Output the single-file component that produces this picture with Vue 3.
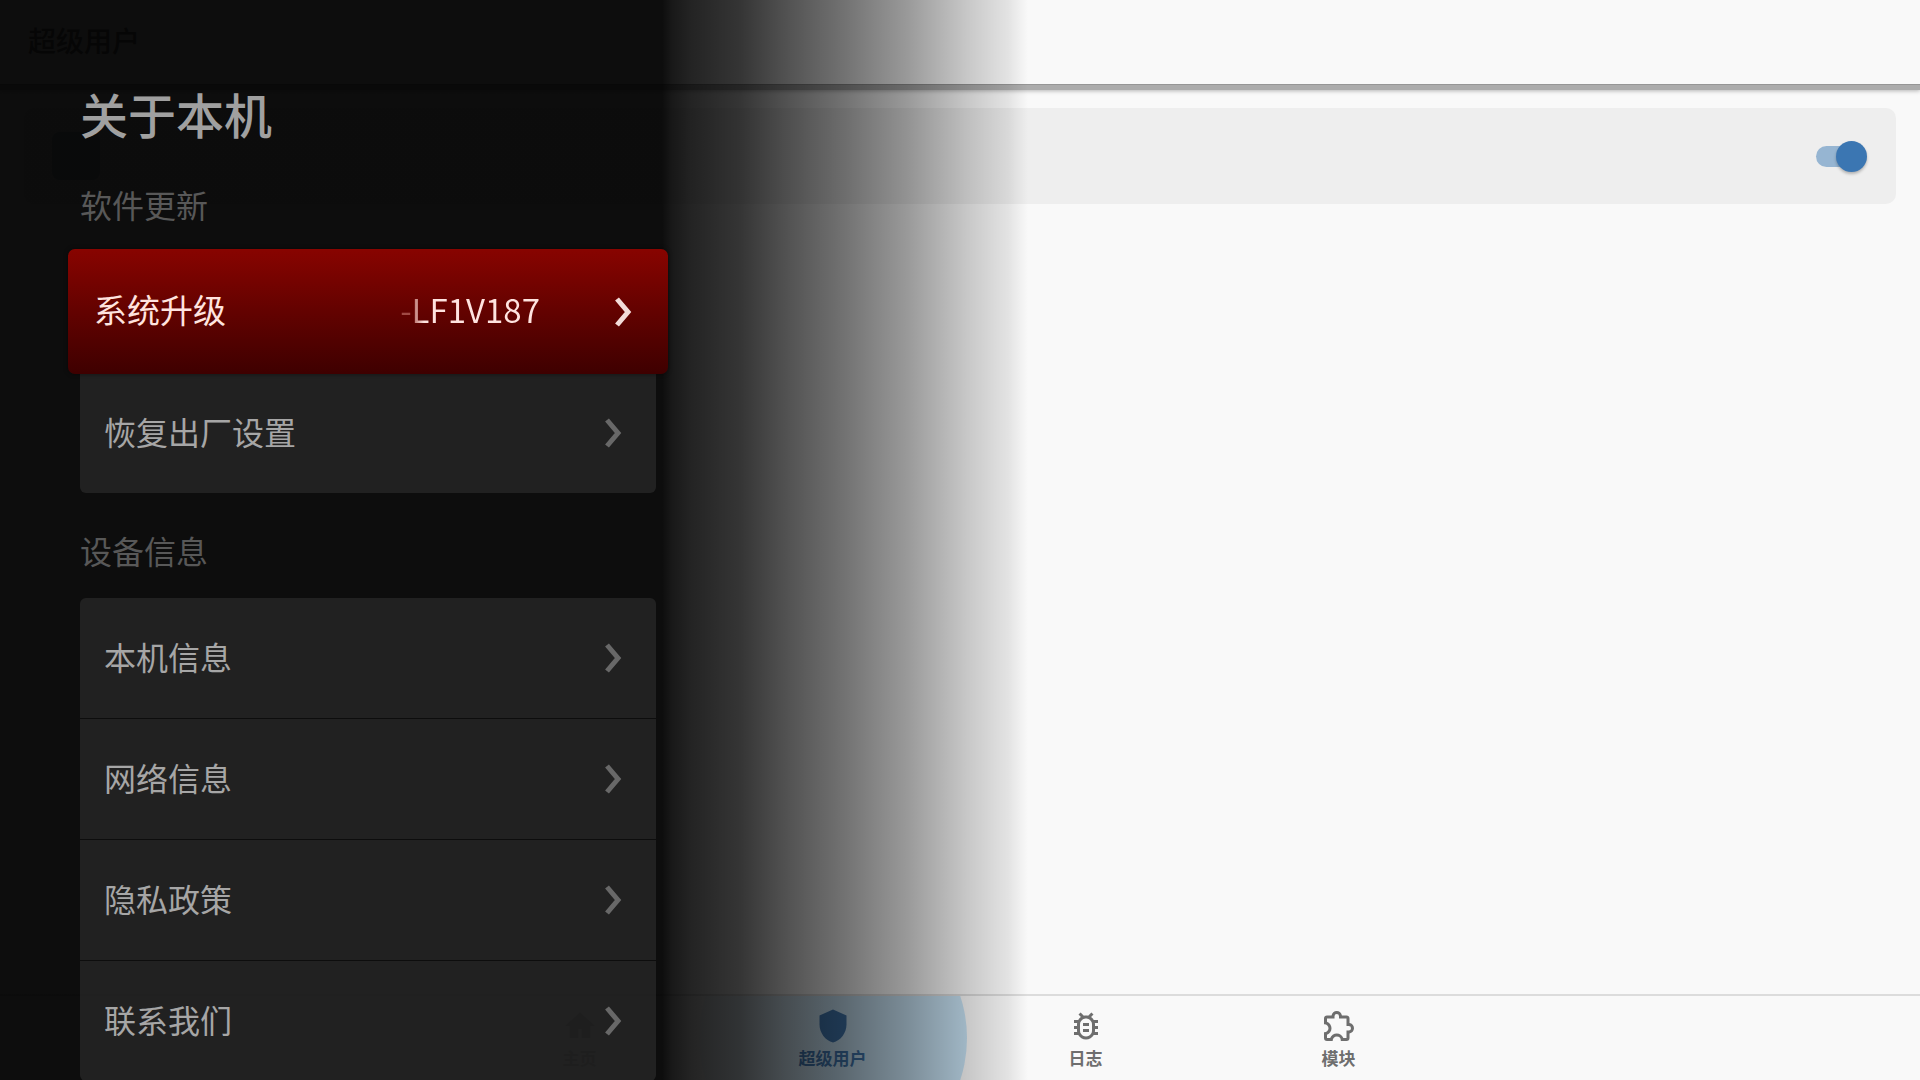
<script setup>
import { ref } from 'vue'

const superuserEnabled = ref(true)

const tabs = [
  {
    id: 'home',
    label: '主页',
    path: 'M12 3L2 12h3v8h6v-6h2v6h6v-8h3L12 3z'
  },
  {
    id: 'superuser',
    label: '超级用户',
    active: true,
    path: 'M12 1L3 5v6c0 5.55 3.84 10.74 9 12 5.16-1.26 9-6.45 9-12V5l-9-4z'
  },
  {
    id: 'logs',
    label: '日志',
    path: 'M20 8h-2.81c-.45-.78-1.07-1.45-1.82-1.96L17 4.41 15.59 3l-2.17 2.17C12.96 5.06 12.49 5 12 5s-.96.06-1.41.17L8.41 3 7 4.41l1.62 1.63C7.88 6.55 7.26 7.22 6.81 8H4v2h2.09c-.05.33-.09.66-.09 1v1H4v2h2v1c0 .34.04.67.09 1H4v2h2.81c1.04 1.79 2.97 3 5.19 3s4.15-1.21 5.19-3H20v-2h-2.09c.05-.33.09-.66.09-1v-1h2v-2h-2v-1c0-.34-.04-.67-.09-1H20V8zm-4 4v3c0 .22-.03.47-.07.7l-.1.65-.37.65c-.72 1.24-2.04 2-3.46 2s-2.74-.77-3.46-2l-.37-.64-.1-.65C8.03 15.48 8 15.23 8 15v-4c0-.23.03-.48.07-.7l.1-.65.37-.65c.3-.52.72-.97 1.21-1.31l.57-.39.74-.18c.31-.08.63-.12.94-.12.32 0 .63.04.95.12l.68.16.61.42c.5.34.91.78 1.21 1.31l.38.65.1.65c.04.22.07.47.07.69v1zm-6 2h4v2h-4v-2zm0-4h4v2h-4v-2z'
  },
  {
    id: 'modules',
    label: '模块',
    path: 'M22,13.5C22,15.26 20.7,16.72 19,16.96V20A2,2 0 0,1 17,22H13.2V21.7A2.7,2.7 0 0,0 10.5,19C9,19 7.8,20.21 7.8,21.7V22H4A2,2 0 0,1 2,20V16.2H2.3C3.79,16.2 5,15 5,13.5C5,12 3.79,10.8 2.3,10.8H2V7A2,2 0 0,1 4,5H7.04C7.28,3.3 8.74,2 10.5,2C12.26,2 13.72,3.3 13.96,5H17A2,2 0 0,1 19,7V10.04C20.7,10.28 22,11.74 22,13.5M17,15H18.5A1.5,1.5 0 0,0 20,13.5A1.5,1.5 0 0,0 18.5,12H17V7H12V5.5A1.5,1.5 0 0,0 10.5,4A1.5,1.5 0 0,0 9,5.5V7H4V9.12C5.76,9.8 7,11.5 7,13.5C7,15.5 5.75,17.2 4,17.88V20H6.12C6.8,18.25 8.5,17 10.5,17C12.5,17 14.2,18.25 14.88,20H17V15Z'
  }
]

const groups = [
  {
    title: '软件更新',
    items: [
      { label: '系统升级', value: '-LF1V187', focused: true },
      { label: '恢复出厂设置' }
    ]
  },
  {
    title: '设备信息',
    items: [
      { label: '本机信息' },
      { label: '网络信息' },
      { label: '隐私政策' },
      { label: '联系我们' }
    ]
  }
]
</script>

<template>
  <div class="screen">
    <div class="app">
      <header class="app-bar">
        <span class="app-title">超级用户</span>
      </header>

      <main class="app-body">
        <div class="policy-card">
          <span class="policy-icon"></span>
          <input
            v-model="superuserEnabled"
            class="switch"
            type="checkbox"
            aria-label="超级用户"
          />
        </div>
      </main>

      <nav class="tab-bar">
        <a
          v-for="tab in tabs"
          :key="tab.id"
          class="tab"
          :class="{ active: tab.active }"
          :href="'#' + tab.id"
        >
          <svg class="tab-icon" viewBox="0 0 24 24" aria-hidden="true">
            <path :d="tab.path" />
          </svg>
          <span class="tab-label">{{ tab.label }}</span>
        </a>
      </nav>
    </div>

    <aside class="drawer">
      <div class="drawer-content">
        <h1 class="drawer-title">关于本机</h1>
        <section v-for="group in groups" :key="group.title" class="group">
          <h2 class="group-title">{{ group.title }}</h2>
          <div class="group-card">
            <button
              v-for="item in group.items"
              :key="item.label"
              type="button"
              class="row"
              :class="{ focused: item.focused }"
            >
              <span class="row-label">{{ item.label }}</span>
              <span v-if="item.value" class="row-value">{{ item.value }}</span>
              <svg class="chevron" viewBox="0 0 18 30" aria-hidden="true">
                <path d="M3 2L14 15L3 28" />
              </svg>
            </button>
          </div>
        </section>
      </div>
    </aside>
  </div>
</template>

<style>
body {
  margin: 0;
  background: #f9f9f9;
}
</style>

<style scoped>
.screen {
  position: relative;
  height: 100vh;
  overflow: hidden;
  font-family: "Noto Sans CJK SC", "Noto Sans", sans-serif;
}

.app {
  display: flex;
  flex-direction: column;
  height: 100%;
  background: #f9f9f9;
}

.app-bar {
  display: flex;
  align-items: center;
  box-sizing: border-box;
  height: 84px;
  padding: 0 28px 4px;
  background: #f9f9f9;
  box-shadow: 0 1px 0 #969696, 0 6px 0 #acacac, 0 7px 4px #b4b4b4;
}

.app-title {
  font-size: 28px;
  font-weight: 500;
  color: #6c6c6c;
}

.app-body {
  flex: 1;
  padding: 24px;
}

.policy-card {
  display: flex;
  align-items: center;
  justify-content: space-between;
  box-sizing: border-box;
  height: 96px;
  padding: 0 28px;
  border-radius: 10px;
  background: #eeeeee;
}

.policy-icon {
  width: 48px;
  height: 48px;
  border-radius: 8px;
  background: #a8c0cc;
}

.switch {
  position: relative;
  appearance: none;
  width: 52px;
  height: 32px;
  margin: 0;
}

.switch::before {
  content: "";
  position: absolute;
  top: 6px;
  left: 0;
  width: 44px;
  height: 21px;
  border-radius: 11px;
  background: #cccccc;
}

.switch::after {
  content: "";
  position: absolute;
  top: 1px;
  left: 0;
  width: 31px;
  height: 31px;
  border-radius: 50%;
  background: #ffffff;
  box-shadow: 0 2px 3px rgba(0, 0, 0, 0.25);
}

.switch:checked::before {
  background: #96b5d2;
}

.switch:checked::after {
  left: 20px;
  background: #3b76b2;
}

.tab-bar {
  display: flex;
  justify-content: center;
  height: 84px;
  padding-right: 2px;
  overflow: hidden;
  background: #f9f9f9;
  border-top: 2px solid #dcdcdc;
}

.tab {
  position: relative;
  display: flex;
  flex-direction: column;
  align-items: center;
  width: 253px;
  padding-top: 12px;
  color: #6e6e6e;
  text-decoration: none;
}

.tab:first-child {
  color: #a8a8a8;
}

.tab-icon {
  position: relative;
  width: 36px;
  height: 36px;
  fill: currentColor;
}

.tab-label {
  position: relative;
  font-size: 17px;
  line-height: 28px;
  font-weight: 700;
}

.tab.active {
  color: #4279b2;
}

.tab.active::before {
  content: "";
  position: absolute;
  top: -92px;
  left: -7px;
  width: 268px;
  height: 268px;
  border-radius: 50%;
  background: linear-gradient(to right, #f2f6f9, #c8e4f6 50%);
}

.drawer {
  position: absolute;
  inset: 0 auto 0 0;
  width: 1028px;
  overflow: hidden;
  background: linear-gradient(
    to right,
    rgba(0, 0, 0, 0.95) 662px,
    rgba(0, 0, 0, 0.9) 672px,
    rgba(0, 0, 0, 0.86) 690px,
    rgba(0, 0, 0, 0.79) 740px,
    rgba(0, 0, 0, 0.68) 784px,
    rgba(0, 0, 0, 0.54) 845px,
    rgba(0, 0, 0, 0.39) 906px,
    rgba(0, 0, 0, 0.2) 967px,
    rgba(0, 0, 0, 0.09) 1008px,
    rgba(0, 0, 0, 0) 1028px
  );
}

.drawer-content {
  width: 576px;
  padding: 85px 0 0 80px;
}

.drawer-title {
  margin: 0 0 43px;
  font-size: 48px;
  line-height: 56px;
  font-weight: 500;
  color: #a0a0a0;
}

.group {
  margin-bottom: 37px;
}

.group-title {
  margin: 0 0 28px;
  font-size: 32px;
  line-height: 40px;
  font-weight: 400;
  color: #585858;
}

.group-card {
  display: flex;
  flex-direction: column;
  gap: 1px;
}

.row {
  display: flex;
  align-items: center;
  box-sizing: border-box;
  height: 120px;
  padding: 0 34px 0 24px;
  border: 0;
  background: rgba(255, 255, 255, 0.085);
  font-family: inherit;
  font-size: 32px;
  line-height: 40px;
  color: #a6a6a6;
  text-align: left;
}

.row:first-child {
  border-radius: 6px 6px 0 0;
}

.row:last-child {
  border-radius: 0 0 6px 6px;
}

.row-label,
.row-value {
  padding-bottom: 5px;
}

.row-label {
  flex: 1;
}

.row-value {
  margin-right: 74px;
  background: linear-gradient(to right, #a04a44 10px, #ffe3df 24px);
  background-clip: text;
  color: transparent;
}

.chevron {
  width: 18px;
  height: 30px;
  fill: none;
  stroke: #686868;
  stroke-width: 5;
}

.row.focused {
  position: relative;
  height: 125px;
  margin: -3px -12px -2px;
  padding: 0 36px 0 26px;
  border-radius: 7px;
  background: linear-gradient(#880400, #3e0000);
  box-shadow: 0 0 4px rgba(0, 0, 0, 0.5);
  font-size: 33px;
  color: #ffe3df;
}

.row.focused .chevron {
  stroke: #f3dcd9;
}
</style>
